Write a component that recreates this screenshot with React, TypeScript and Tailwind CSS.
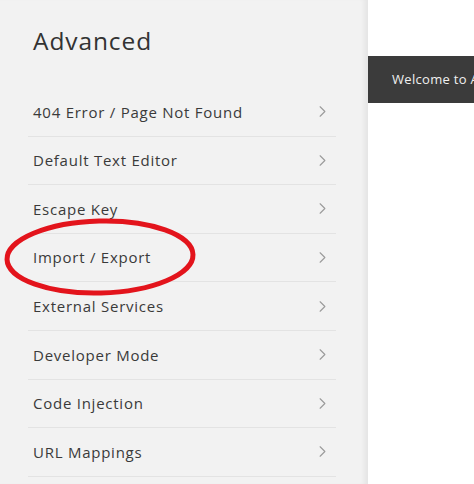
import { ChevronRight } from "lucide-react";

const items = [
  "404 Error / Page Not Found",
  "Default Text Editor",
  "Escape Key",
  "Import / Export",
  "External Services",
  "Developer Mode",
  "Code Injection",
  "URL Mappings",
];

export default function App() {
  return (
    <div
      className="relative flex h-[484px] w-[474px] overflow-hidden bg-white"
      style={{ fontFamily: '"Open Sans", "Liberation Sans", sans-serif' }}
    >
      <aside className="flex h-full w-[368px] shrink-0 bg-[#f2f2f2] pl-[28px] pr-[32px] shadow-[inset_-6px_0_4px_-2px_rgba(0,0,0,0.05)]">
        <div className="flex w-full flex-col">
          <h1 className="mt-[23px] h-[65px] pl-[5px] text-[24.5px] font-normal tracking-[0.9px] text-[#333]">
            Advanced
          </h1>
          <ul className="flex flex-col">
            {items.map((label) => (
              <li
                key={label}
                className="flex h-[48.6px] items-center justify-between border-b border-[#e3e3e3] pl-[5px] pr-[4px]"
              >
                <span className="text-[15px] tracking-[0.75px] text-[#3a3a3a]">{label}</span>
                <ChevronRight className="h-[19px] w-[19px] text-[#9a9a9a]" strokeWidth={1.4} />
              </li>
            ))}
          </ul>
        </div>
      </aside>
      <div className="mt-[56px] flex h-[47px] min-w-0 flex-1 items-center self-start overflow-hidden bg-[#3b3b3b] pl-[24px]">
        <span className="whitespace-nowrap text-[13px] tracking-[0.3px] text-[#f0f0f0]">Welcome to A</span>
      </div>
      {/* hand-drawn annotation */}
      <svg className="pointer-events-none absolute left-0 top-0" width="474" height="484">
        <ellipse
          cx="100"
          cy="257"
          rx="93"
          ry="36"
          fill="none"
          stroke="#e3141c"
          strokeWidth="5"
          transform="rotate(-1.5 100 257)"
        />
      </svg>
    </div>
  );
}
